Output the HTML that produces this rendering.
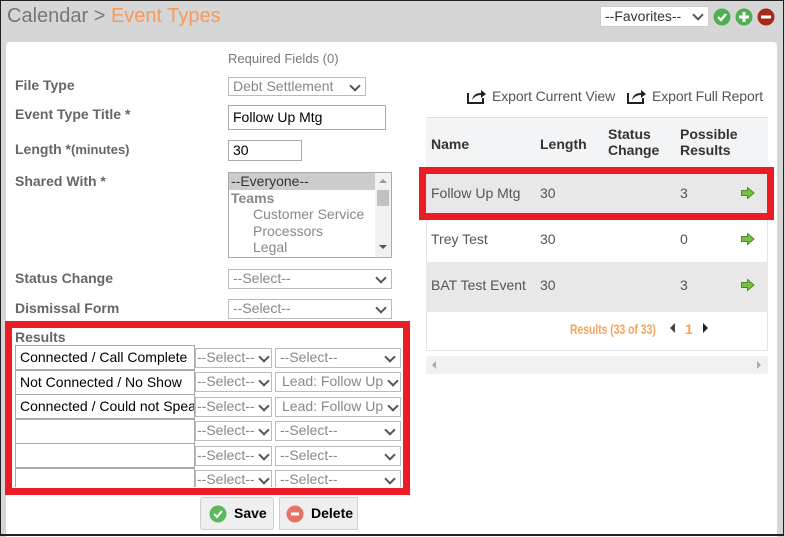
<!DOCTYPE html>
<html><head><meta charset="utf-8"><style>
*{box-sizing:border-box;margin:0;padding:0}
body{width:785px;height:537px;overflow:hidden;background:#d6d6d6;font-family:"Liberation Sans",Arial,sans-serif;position:relative}
.frame{position:absolute;left:0;top:0;width:784px;height:536px;border:1px solid #222;border-bottom:2px solid #222}
.a{position:absolute}
.panel{position:absolute;left:6px;top:42px;width:771px;height:495px;background:#fff;border-radius:4px 4px 0 0}
.lbl{position:absolute;left:15px;font-weight:bold;font-size:14px;color:#666}
.sel{position:absolute;border:1px solid #bbb;background:#fff;font-size:14px;color:#888;padding-left:4px;line-height:17px;white-space:nowrap;overflow:hidden}
.sel:after{content:"";position:absolute;right:6px;top:4px;width:6px;height:6px;border-right:2px solid #555;border-bottom:2px solid #555;transform:rotate(45deg)}
.sel.n{padding-left:1px}
.sel.n:after{right:3px}
.inp{position:absolute;border:1px solid #aaa;background:#fff;font-size:14px;color:#000;padding-left:4px;white-space:nowrap;overflow:hidden}
.red{position:absolute;border:7px solid #ed1c24}
.th{position:absolute;font-weight:bold;font-size:14px;color:#333;line-height:16px}
.td{position:absolute;font-size:14px;color:#555}
.arr{position:absolute;left:741px;width:14px;height:12px}
</style></head><body>
<div class="a" style="left:7px;top:5px;font-size:20px;color:#777">Calendar &gt; <span style="color:#f79a5b">Event Types</span></div>
<div class="sel" style="left:600px;top:6px;width:109px;height:21px;color:#333;font-size:14px;line-height:19px;border-color:#ccc">--Favorites--</div>
<svg class="a" style="left:713px;top:8px" width="66" height="18">
<circle cx="9" cy="9" r="8.5" fill="#4caf50"/><path d="M5 9l3 3 5-6" stroke="#fff" stroke-width="2.4" fill="none"/>
<circle cx="31" cy="9" r="8.5" fill="#4caf50"/><path d="M31 4v10M26 9h10" stroke="#fff" stroke-width="3"/>
<circle cx="53" cy="9" r="8.5" fill="#a52a1a"/><path d="M48 9h10" stroke="#fff" stroke-width="3"/>
</svg>
<div class="panel"></div>
<div class="a" style="left:228px;top:51px;font-size:13px;color:#777">Required Fields (0)</div>
<div class="lbl" style="top:77px">File Type</div>
<div class="lbl" style="top:106px">Event Type Title *</div>
<div class="lbl" style="top:141px">Length *<span style="font-size:13px">(minutes)</span></div>
<div class="lbl" style="top:173px">Shared With *</div>
<div class="lbl" style="top:270px">Status Change</div>
<div class="lbl" style="top:300px">Dismissal Form</div>
<div class="sel" style="left:228px;top:77px;width:138px;height:19px;color:#888">Debt Settlement</div>
<div class="inp" style="left:228px;top:105px;width:158px;height:25px;line-height:23px">Follow Up Mtg</div>
<div class="inp" style="left:228px;top:140px;width:74px;height:21px;line-height:19px">30</div>
<div class="a" style="left:228px;top:172px;width:164px;height:86px;border:1px solid #aaa;overflow:hidden;font-size:14px;line-height:16.5px;color:#888">
<div style="background:#ccc;color:#333;padding-left:2px;width:146px">--Everyone--</div>
<div style="padding-left:2px;font-weight:bold">Teams</div>
<div style="padding-left:24px">Customer Service</div>
<div style="padding-left:24px">Processors</div>
<div style="padding-left:24px">Legal</div>
<div class="a" style="left:146px;top:0;width:16px;height:84px;background:#f1f1f1"></div>
<div class="a" style="left:148px;top:17px;width:12px;height:16px;background:#c1c1c1"></div>
<div class="a" style="left:150px;top:6px;border:4px solid transparent;border-bottom-color:#999;border-top:0"></div>
<div class="a" style="left:150px;top:72px;border:4px solid transparent;border-top-color:#555;border-bottom:0"></div>
</div>
<div class="sel" style="left:228px;top:269px;width:164px;height:20px">--Select--</div>
<div class="sel" style="left:228px;top:299px;width:164px;height:20px">--Select--</div>
<div class="red" style="left:5px;top:321px;width:405px;height:174px"></div>
<div class="lbl" style="top:329px">Results</div>
<div class="inp" style="left:15px;top:345px;width:180px;height:25px;line-height:23px">Connected / Call Complete</div>
<div class="inp" style="left:15px;top:370px;width:180px;height:25px;line-height:23px">Not Connected / No Show</div>
<div class="inp" style="left:15px;top:394px;width:180px;height:25px;line-height:23px">Connected / Could not Speak</div>
<div class="inp" style="left:15px;top:419px;width:180px;height:25px"></div>
<div class="inp" style="left:15px;top:443px;width:180px;height:25px"></div>
<div class="inp" style="left:15px;top:468px;width:180px;height:19px;border-bottom:0"></div>
<div class="sel n" style="left:195px;top:348px;width:77px;height:20px">--Select--</div>
<div class="sel n" style="left:195px;top:372px;width:77px;height:20px">--Select--</div>
<div class="sel n" style="left:195px;top:397px;width:77px;height:20px">--Select--</div>
<div class="sel n" style="left:195px;top:421px;width:77px;height:20px">--Select--</div>
<div class="sel n" style="left:195px;top:446px;width:77px;height:20px">--Select--</div>
<div class="sel n" style="left:195px;top:470px;width:77px;height:17px;border-bottom:0">--Select--</div>
<div class="sel" style="left:275px;top:348px;width:126px;height:20px">--Select--</div>
<div class="sel n" style="left:275px;top:372px;width:126px;height:20px;padding-left:6px">Lead: Follow Up</div>
<div class="sel n" style="left:275px;top:397px;width:126px;height:20px;padding-left:6px">Lead: Follow Up</div>
<div class="sel" style="left:275px;top:421px;width:126px;height:20px">--Select--</div>
<div class="sel" style="left:275px;top:446px;width:126px;height:20px">--Select--</div>
<div class="sel" style="left:275px;top:470px;width:126px;height:17px;border-bottom:0">--Select--</div>
<div class="a" style="left:200px;top:497px;width:74px;height:33px;background:#efefef;border:1px solid #d0d0d0;border-radius:3px;font-weight:bold;font-size:14px;line-height:31px;padding-left:33px">Save</div>
<svg class="a" style="left:209px;top:505px" width="18" height="18"><circle cx="9" cy="9" r="8.5" fill="#5cb85c"/><path d="M5 9l3 3 5-6" stroke="#fff" stroke-width="2" fill="none"/></svg>
<div class="a" style="left:279px;top:497px;width:79px;height:33px;background:#efefef;border:1px solid #d0d0d0;font-weight:bold;font-size:14px;line-height:31px;padding-left:31px">Delete</div>
<svg class="a" style="left:286px;top:505px" width="18" height="18"><circle cx="9" cy="9" r="8.5" fill="#e57368"/><path d="M5 9h8" stroke="#fff" stroke-width="3"/></svg>
<svg class="a" style="left:467px;top:88px" width="19" height="16"><path d="M1 5v10h15v-5" stroke="#222" stroke-width="2" fill="none"/><path d="M5 12c1-5 4-7 9-7V2l5 4-5 4V7c-4 0-7 2-9 5z" fill="#222"/></svg>
<div class="a" style="left:492px;top:88px;font-size:14px;color:#555;letter-spacing:-0.1px">Export Current View</div>
<svg class="a" style="left:627px;top:88px" width="19" height="16"><path d="M1 5v10h15v-5" stroke="#222" stroke-width="2" fill="none"/><path d="M5 12c1-5 4-7 9-7V2l5 4-5 4V7c-4 0-7 2-9 5z" fill="#222"/></svg>
<div class="a" style="left:652px;top:88px;font-size:14px;color:#555;letter-spacing:-0.1px">Export Full Report</div>
<div class="a" style="left:426px;top:117px;width:342px;height:234px;border:1px solid #e4e4e4;background:#fff"></div>
<div class="a" style="left:426px;top:117px;width:342px;height:52px;background:#f3f4f5;border-top:1px solid #ddd"></div>
<div class="th" style="left:431px;top:136px">Name</div>
<div class="th" style="left:540px;top:136px">Length</div>
<div class="th" style="left:608px;top:126px">Status<br>Change</div>
<div class="th" style="left:680px;top:126px">Possible<br>Results</div>
<div class="a" style="left:426px;top:170px;width:342px;height:46px;background:#e8e8e8"></div>
<div class="a" style="left:426px;top:262px;width:342px;height:50px;background:#e8e8e8"></div>
<div class="td" style="left:431px;top:185px">Follow Up Mtg</div><div class="td" style="left:540px;top:185px">30</div><div class="td" style="left:680px;top:185px">3</div>
<div class="td" style="left:431px;top:231px">Trey Test</div><div class="td" style="left:540px;top:231px">30</div><div class="td" style="left:680px;top:231px">0</div>
<div class="td" style="left:431px;top:277px">BAT Test Event</div><div class="td" style="left:540px;top:277px">30</div><div class="td" style="left:680px;top:277px">3</div>
<svg class="arr" style="top:187px" viewBox="0 0 14 12"><path d="M0.5 3.5h6V0.5l6.5 5.5-6.5 5.5V8.5h-6z" fill="#76c043" stroke="#4e8a2a" stroke-width="1"/></svg>
<svg class="arr" style="top:233px" viewBox="0 0 14 12"><path d="M0.5 3.5h6V0.5l6.5 5.5-6.5 5.5V8.5h-6z" fill="#76c043" stroke="#4e8a2a" stroke-width="1"/></svg>
<svg class="arr" style="top:279px" viewBox="0 0 14 12"><path d="M0.5 3.5h6V0.5l6.5 5.5-6.5 5.5V8.5h-6z" fill="#76c043" stroke="#4e8a2a" stroke-width="1"/></svg>
<div class="red" style="left:419px;top:167px;width:355px;height:53px"></div>
<div class="a" style="left:570px;top:321px;font-size:14px;font-weight:bold;color:#f7a35c;transform:scaleX(0.74);transform-origin:0 0;white-space:nowrap">Results (33 of 33)</div>
<div class="a" style="left:670px;top:323px;border:5px solid transparent;border-right-color:#444;border-left:0"></div>
<div class="a" style="left:685px;top:321px;font-size:14px;font-weight:bold;color:#f7a35c">1</div>
<div class="a" style="left:703px;top:323px;border:5px solid transparent;border-left-color:#222;border-right:0"></div>
<div class="a" style="left:426px;top:356px;width:342px;height:18px;background:#f1f1f1"></div>
<div class="a" style="left:432px;top:361px;border:4px solid transparent;border-right-color:#aaa;border-left:0"></div>
<div class="a" style="left:757px;top:361px;border:4px solid transparent;border-left-color:#aaa;border-right:0"></div>
<div class="frame"></div>
</body></html>
